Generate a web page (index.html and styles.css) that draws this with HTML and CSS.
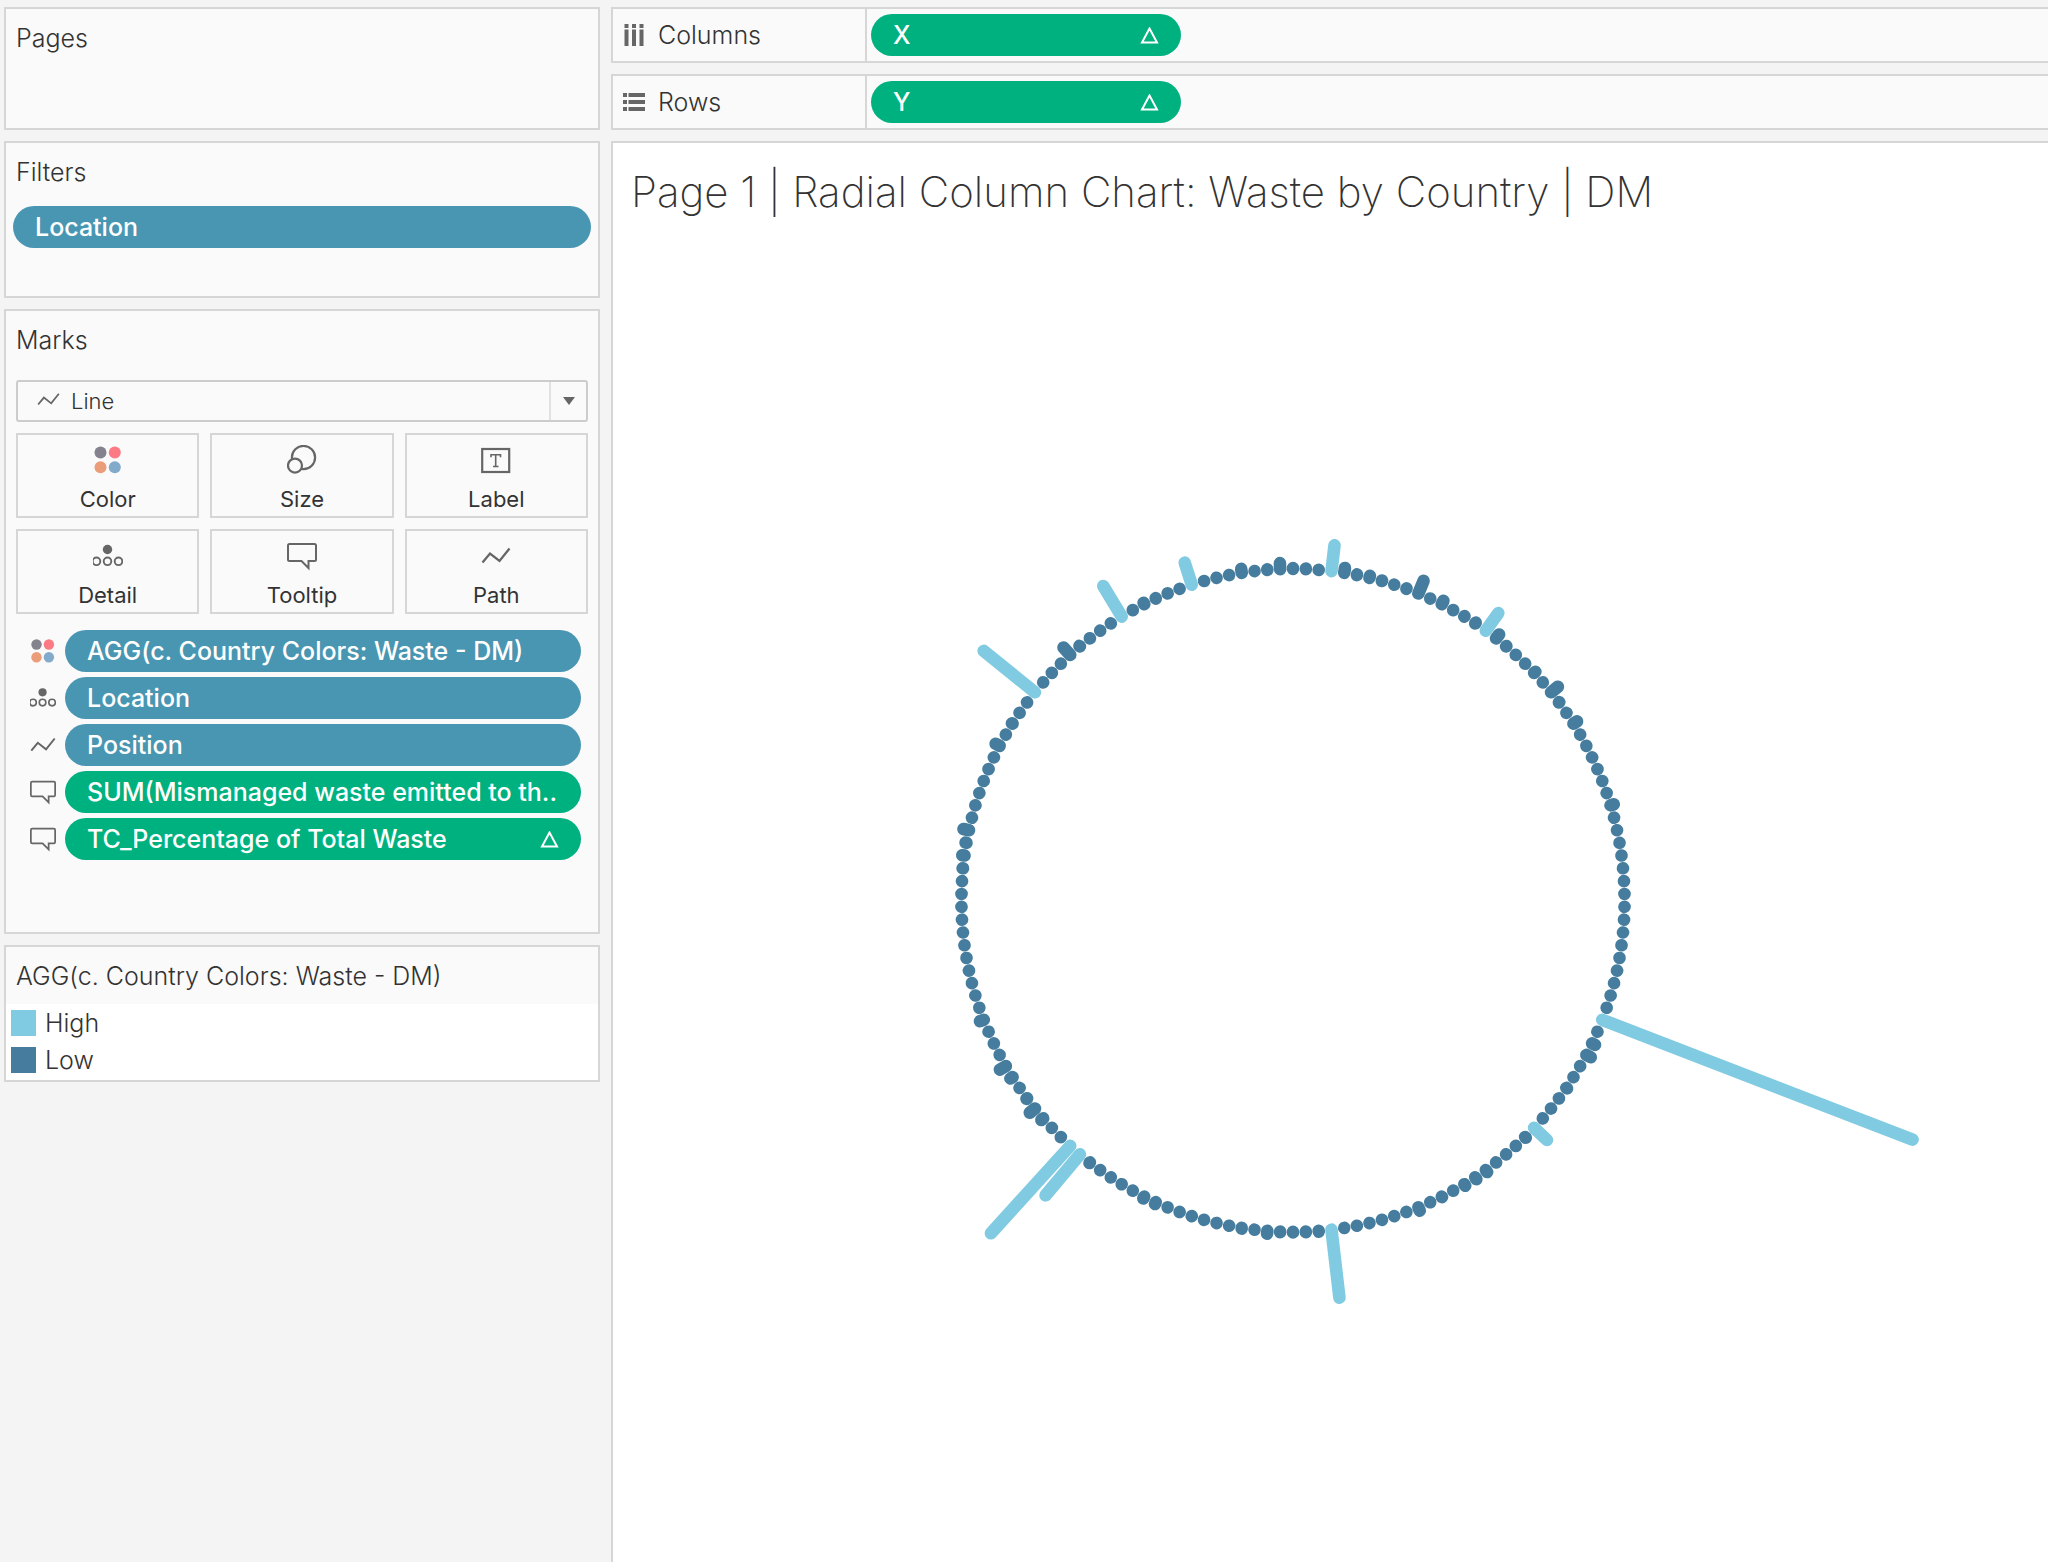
FILE: index.html
```html
<!DOCTYPE html>
<html lang="en">
<head>
    <meta charset="UTF-8">
    <meta name="viewport" content="width=device-width, initial-scale=1.0">
    <title>Radial Column Chart</title>
    <link rel="stylesheet" href="styles.css">
</head>
<body>
    <!-- Shared icons -->
    <svg class="sprite" aria-hidden="true">
        <symbol id="icon-color" viewBox="0 0 30 30">
            <circle cx="7.5" cy="7.5" r="6" fill="#84828c"/>
            <circle cx="21.8" cy="7.5" r="6" fill="#fb7a84"/>
            <circle cx="7.5" cy="22.2" r="6" fill="#eb9c78"/>
            <circle cx="21.8" cy="22.2" r="6" fill="#82aaca"/>
        </symbol>
        <symbol id="icon-size" viewBox="0 0 30 30">
            <circle cx="16.5" cy="12.5" r="11.6" fill="none" stroke="#666" stroke-width="2.200"/>
            <circle cx="8" cy="20.6" r="7" fill="#fafafa" stroke="#666" stroke-width="2.200"/>
        </symbol>
        <symbol id="icon-label" viewBox="0 0 30 30">
            <rect x="1.200" y="4" width="27" height="23" fill="none" stroke="#666" stroke-width="2.200"/>
            <path d="M10 12.200V9.700H19.500V12.200M14.700 9.700V21.500M12 21.500H17.500" fill="none" stroke="#666" stroke-width="1.600"/>
        </symbol>
        <symbol id="icon-detail" viewBox="0 0 30 30">
            <circle cx="14.500" cy="8.500" r="4.700" fill="#666"/>
            <circle cx="3.500" cy="20.300" r="3.800" fill="none" stroke="#666" stroke-width="1.900"/>
            <circle cx="14.500" cy="20.300" r="3.800" fill="none" stroke="#666" stroke-width="1.900"/>
            <circle cx="25.500" cy="20.300" r="3.800" fill="none" stroke="#666" stroke-width="1.900"/>
        </symbol>
        <symbol id="icon-tooltip" viewBox="0 0 30 30">
            <path d="M2.500 3H27.500Q29 3 29 4.500V18.500Q29 20 27.500 20H21.500V27L14.500 20H2.500Q1 20 1 18.500V4.500Q1 3 2.500 3Z" fill="none" stroke="#666" stroke-width="2"/>
        </symbol>
        <symbol id="icon-path" viewBox="0 0 30 30">
            <path d="M1.500 21.500L9 12.500L18.500 20L28.500 7.500" fill="none" stroke="#666" stroke-width="2.300"/>
        </symbol>
        <symbol id="icon-delta" viewBox="0 0 19 17">
            <path d="M9.500 1.500L17 15.500H2Z" fill="none" stroke="#fff" stroke-width="2"/>
        </symbol>
        <symbol id="icon-columns" viewBox="0 0 22 22">
            <path d="M1.500 0h4v4h-4zM9 0h4v4h-4zM16.500 0h4v4h-4zM1.500 5.500h4V22h-4zM9 5.500h4V22h-4zM16.500 5.500h4V22h-4z" fill="#666"/>
        </symbol>
        <symbol id="icon-rows" viewBox="0 0 22 22">
            <path d="M0 2h4v4H0zM0 9h4v4H0zM0 16h4v4H0zM5.500 2H22v4H5.500zM5.500 9H22v4H5.500zM5.500 16H22v4H5.500z" fill="#666"/>
        </symbol>
    </svg>

    <div class="workspace">
        <aside class="sidebar">
            <section class="panel pages">
                <h2>Pages</h2>
            </section>

            <section class="panel filters">
                <h2>Filters</h2>
                <button class="pill blue"><span>Location</span></button>
            </section>

            <section class="panel marks">
                <h2>Marks</h2>
                <div class="mark-type">
                    <svg class="type-icon"><use href="#icon-path"/></svg>
                    <select aria-label="Mark type">
                        <option>Line</option>
                    </select>
                    <span class="arrow"></span>
                </div>
                <div class="mark-buttons">
                    <button><svg><use href="#icon-color"/></svg>Color</button>
                    <button><svg><use href="#icon-size"/></svg>Size</button>
                    <button><svg><use href="#icon-label"/></svg>Label</button>
                    <button><svg><use href="#icon-detail"/></svg>Detail</button>
                    <button><svg><use href="#icon-tooltip"/></svg>Tooltip</button>
                    <button><svg><use href="#icon-path"/></svg>Path</button>
                </div>
                <ul class="mark-pills">
                    <li><svg><use href="#icon-color"/></svg><button class="pill blue"><span>AGG(c. Country Colors: Waste - DM)</span></button></li>
                    <li><svg><use href="#icon-detail"/></svg><button class="pill blue"><span>Location</span></button></li>
                    <li><svg><use href="#icon-path"/></svg><button class="pill blue"><span>Position</span></button></li>
                    <li><svg><use href="#icon-tooltip"/></svg><button class="pill green"><span>SUM(Mismanaged waste emitted to th..</span></button></li>
                    <li><svg><use href="#icon-tooltip"/></svg><button class="pill green"><span>TC_Percentage of Total Waste</span><svg class="delta"><use href="#icon-delta"/></svg></button></li>
                </ul>
            </section>

            <section class="panel legend">
                <h2>AGG(c. Country Colors: Waste - DM)</h2>
                <ul>
                    <li><span class="swatch high"></span>High</li>
                    <li><span class="swatch low"></span>Low</li>
                </ul>
            </section>
        </aside>

        <main class="content">
            <div class="shelf">
                <div class="shelf-name"><svg><use href="#icon-columns"/></svg>Columns</div>
                <button class="pill green"><span>X</span><svg class="delta"><use href="#icon-delta"/></svg></button>
            </div>
            <div class="shelf">
                <div class="shelf-name"><svg><use href="#icon-rows"/></svg>Rows</div>
                <button class="pill green"><span>Y</span><svg class="delta"><use href="#icon-delta"/></svg></button>
            </div>
            <div class="view">
                <h1>Page 1 | Radial Column Chart: Waste by Country | DM</h1>
                <svg id="chart" viewBox="0 0 1435 1200" role="img" aria-label="Waste by country"></svg>
            </div>
        </main>
    </div>

    <script src="chart.js"></script>
</body>
</html>
```
FILE: styles.css
```css
* {
    box-sizing: border-box;
}

body {
    margin: 0;
    background-color: #f4f4f4;
    color: #333333;
    font-family: Inter, "Open Sans", sans-serif;
    font-size: 25px;
    font-weight: 300;
    line-height: 30px;
}

h1, h2, ul {
    margin: 0;
    padding: 0;
    font-weight: 300;
}

ul {
    list-style: none;
}

button, select {
    font: inherit;
    color: inherit;
    cursor: pointer;
}

.sprite {
    display: none;
}

.workspace {
    display: grid;
    grid-template-columns: 596px 1fr;
    gap: 11px;
    min-height: 100vh;
    padding: 7px 0 0 4px;
}

.sidebar {
    display: flex;
    flex-direction: column;
    gap: 11px;
}

.content {
    display: flex;
    flex-direction: column;
    gap: 11px;
}

/* Panels */

.panel {
    background-color: #fafafa;
    border: 2px solid #d6d6d6;
    padding: 14px 7px 13px;
}

.panel h2 {
    padding-left: 3px;
    font-size: 25px;
}

.pages {
    min-height: 123px;
}

.filters {
    min-height: 157px;
}

.filters .pill {
    width: 100%;
    margin-top: 19px;
}

.marks {
    min-height: 625px;
}

/* Pills */

.pill {
    display: flex;
    align-items: center;
    justify-content: space-between;
    height: 42px;
    padding: 0 22px;
    border: none;
    border-radius: 21px;
    color: #ffffff;
    font-weight: 500;
    text-align: left;
    white-space: nowrap;
}

.blue {
    background-color: #4996b2;
}

.green {
    background-color: #00b180;
}

.delta {
    width: 19px;
    height: 17px;
}

/* Marks card */

.mark-type {
    position: relative;
    margin: 25px 3px 11px;
}

.mark-type select {
    display: block;
    appearance: none;
    width: 100%;
    height: 42px;
    padding: 0 40px 0 53px;
    border: 2px solid #cccccc;
    border-radius: 3px;
    background-color: #fafafa;
    font-size: 22px;
}

.type-icon {
    position: absolute;
    left: 21px;
    top: 8px;
    width: 23px;
    height: 23px;
}

.arrow {
    position: absolute;
    right: 2px;
    top: 2px;
    bottom: 2px;
    width: 37px;
    border-left: 2px solid #e2e2e2;
    display: flex;
    align-items: center;
    justify-content: center;
    pointer-events: none;
}

.arrow::after {
    content: "";
    border: 6px solid transparent;
    border-top: 8px solid #666666;
    border-bottom: none;
}

.mark-buttons {
    display: grid;
    grid-template-columns: repeat(3, 1fr);
    gap: 11px;
    margin: 0 3px 16px;
}

.mark-buttons button {
    display: flex;
    flex-direction: column;
    align-items: center;
    gap: 9px;
    height: 85px;
    padding: 10px 0 0;
    border: 2px solid #d6d6d6;
    background-color: #fafafa;
    font-size: 22px;
    font-weight: 400;
}

.mark-buttons svg {
    width: 30px;
    height: 30px;
}

.mark-pills {
    display: flex;
    flex-direction: column;
    gap: 5px;
    padding: 0 10px 0 17px;
}

.mark-pills li {
    display: flex;
    align-items: center;
    gap: 9px;
}

.mark-pills li > svg {
    flex: none;
    width: 26px;
    height: 26px;
    overflow: visible;
}

.mark-pills .pill {
    flex: 1;
    min-width: 0;
}

/* Legend */

.legend {
    padding: 0;
}

.legend h2 {
    padding: 14px 10px 13px;
}

.legend ul {
    display: flex;
    flex-direction: column;
    gap: 11px;
    padding: 6px 5px 7px;
    background-color: #ffffff;
}

.legend li {
    display: flex;
    align-items: center;
    gap: 9px;
    height: 26px;
}

.swatch {
    width: 25px;
    height: 26px;
}

.high {
    background-color: #81cbe2;
}

.low {
    background-color: #467d9e;
}

/* Shelves */

.shelf {
    display: flex;
    align-items: center;
    height: 56px;
    border: 2px solid #d6d6d6;
    border-right: none;
    background-color: #fafafa;
}

.shelf-name {
    display: flex;
    align-items: center;
    gap: 13px;
    align-self: stretch;
    width: 254px;
    padding-left: 10px;
    border-right: 2px solid #d6d6d6;
}

.shelf-name svg {
    width: 22px;
    height: 22px;
}

.shelf .pill {
    width: 310px;
    margin-left: 4px;
}

/* View */

.view {
    flex: 1;
    border: 2px solid #d6d6d6;
    border-right: none;
    border-bottom: none;
    background-color: #ffffff;
}

.view h1 {
    padding: 24px 18px 0;
    font-size: 42px;
    font-weight: 200;
    line-height: 50px;
}

#chart {
    display: block;
    width: 100%;
    height: auto;
}

#chart line {
    stroke-width: 12.6px;
    stroke-linecap: round;
}

.bar-low {
    stroke: #467d9e;
}

.bar-high {
    stroke: #81cbe2;
}
```
FILE: chart.js
```js
const chart = document.getElementById('chart');

const COUNT = 162;
const RADIUS = 331.5;
const CX = 680;
const CY = 683.4;

// Share of waste as column length, by clockwise position
const low = {
    0: 0.8, 1: 0.5, 4: 5, 5: 0.7, 6: 2, 7: 0.5, 9: 0.5, 10: 13.7, 12: 3.7, 14: 0.5, 15: 1,
    17: 5, 18: 0.5, 21: 1.7, 23: 8.8, 24: 0.5, 26: 4.3, 33: 3.3, 52: 3.3, 53: 5, 56: 0.8,
    61: 1, 65: 2.4, 66: 2.2, 67: 1.8, 69: 0.5, 71: 3.6, 79: 0.7, 80: 0.5, 81: 0.5, 82: 0.5,
    83: 2.7, 85: 0.7, 92: 2, 93: 2, 98: 0.8, 103: 2.5, 104: 6.7, 105: 0.8, 107: 2.5, 108: 7,
    112: 4, 124: 0.5, 125: 2.3, 126: 1, 127: 5.7, 134: 4.6, 136: 0.7, 143: 10, 144: 0.7,
    150: 1.5, 151: 0.5, 158: 4, 160: 0.5, 161: 6
};
const high = {
    3: 26, 16: 21.6, 50: 332.6, 60: 17.7, 78: 68.5, 99: 53.5, 100: 118, 139: 65.9, 148: 35.7, 154: 23.2
};

function drawBar(i, length, type) {
    const angle = i / COUNT * 2 * Math.PI;
    const line = document.createElementNS('http://www.w3.org/2000/svg', 'line');
    const end = RADIUS + Math.max(length, 0.1);
    line.setAttribute('x1', CX + RADIUS * Math.sin(angle));
    line.setAttribute('y1', CY - RADIUS * Math.cos(angle));
    line.setAttribute('x2', CX + end * Math.sin(angle));
    line.setAttribute('y2', CY - end * Math.cos(angle));
    line.setAttribute('class', 'bar-' + type);
    chart.appendChild(line);
}

for (let i = 0; i < COUNT; i++) {
    if (i in high) {
        drawBar(i, high[i], 'high');
    } else {
        drawBar(i, low[i] || 0, 'low');
    }
}
```
